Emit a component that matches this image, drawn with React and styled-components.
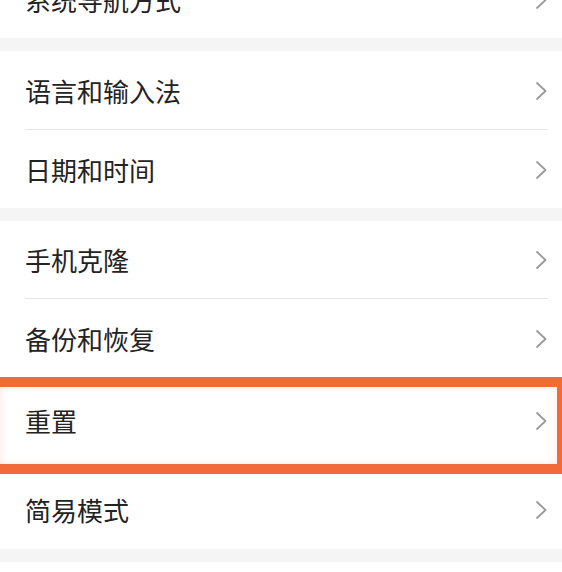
import React from "react";
import styled, { createGlobalStyle } from "styled-components";

const GlobalStyle = createGlobalStyle`
  html, body {
    margin: 0;
    padding: 0;
    background: #f5f5f5;
    overflow: hidden;
  }
  body {
    font-family: "Noto Sans CJK SC", "Noto Sans", sans-serif;
  }
`;

const Page = styled.div`
  width: 562px;
  height: 572px;
  overflow: hidden;
  background: #f5f5f5;
`;

const List = styled.div`
  margin-top: -40px;
  display: flex;
  flex-direction: column;
  gap: 13px;
`;

const Section = styled.div`
  background: #fff;
  display: flex;
  flex-direction: column;
`;

const Row = styled.div`
  position: relative;
  height: ${(p) => p.$h || 78}px;
  display: flex;
  align-items: center;
  padding: ${(p) => p.$shift ?? 1}px 0 0 25px;
  box-sizing: border-box;
`;

const Label = styled.span`
  flex: 1;
  font-size: 26px;
  line-height: 1;
  color: #232323;
`;

const Arrow = styled.span`
  width: 13px;
  height: 20px;
  margin-right: 14px;
  display: flex;
  color: #9a9a9a;
`;

const Divider = styled.div`
  height: 1px;
  margin: 0 14px 0 25px;
  background: #e6e6e6;
`;

const Highlight = styled.div`
  position: absolute;
  top: 0;
  bottom: -10px;
  left: -10px;
  right: 0;
  border: 10px solid #f26a3c;
  border-right-width: 5px;
  box-shadow: inset 0 0 6px rgba(242, 106, 60, 0.18);
  pointer-events: none;
`;

function Chevron() {
  return (
    <Arrow>
      <svg width="13" height="20" viewBox="0 0 13 20" fill="none">
        <path d="M2 2 L10.5 10 L2 18" stroke="currentColor" strokeWidth="1.8" strokeLinecap="round" strokeLinejoin="round" />
      </svg>
    </Arrow>
  );
}

function Item({ label, h, shift, highlight }) {
  return (
    <Row $h={h} $shift={shift}>
      <Label>{label}</Label>
      <Chevron />
      {highlight && <Highlight />}
    </Row>
  );
}

const sections = [
  [{ label: "系统导航方式", h: 78 }],
  [
    { label: "语言和输入法", h: 78 },
    { label: "日期和时间", h: 78 },
  ],
  [
    { label: "手机克隆", h: 77 },
    { label: "备份和恢复", h: 78 },
    { label: "重置", h: 87, shift: 0, highlight: true, noDivider: true },
    { label: "简易模式", h: 85, shift: 6 },
  ],
  [{ label: "", h: 78 }],
];

export default function App() {
  return (
    <Page>
      <GlobalStyle />
      <List>
        {sections.map((items, i) => (
          <Section key={i}>
            {items.map((it, j) => (
              <React.Fragment key={j}>
                {j > 0 && !items[j - 1].highlight && !it.noDivider && <Divider />}
                {it.label ? <Item {...it} /> : <Row $h={it.h} />}
              </React.Fragment>
            ))}
          </Section>
        ))}
      </List>
    </Page>
  );
}
